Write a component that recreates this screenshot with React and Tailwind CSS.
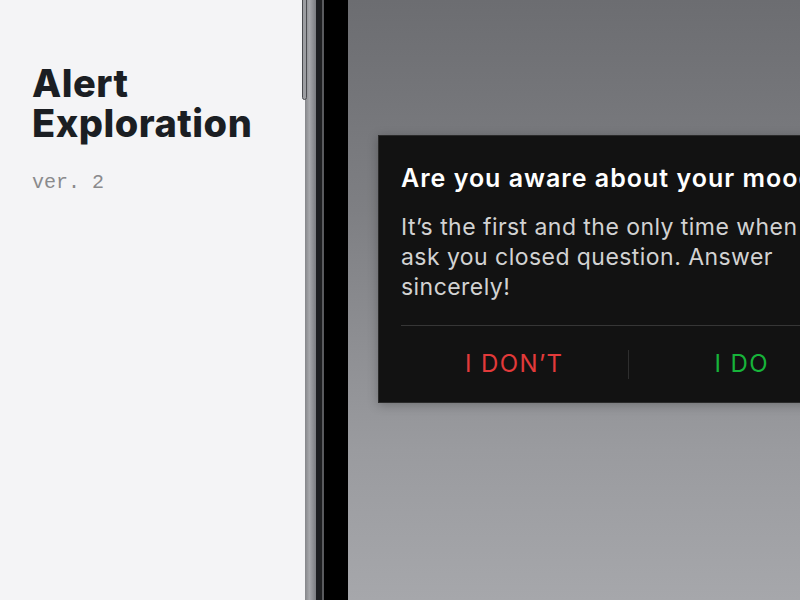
import React from "react";

export default function App() {
  return (
    <div className="w-[800px] h-[600px] overflow-hidden flex bg-[#f4f4f6]">
      <div className="w-[305px] shrink-0 bg-[#f4f4f6] pl-[32px] pt-[63px]">
        <h1 className="text-[38px] leading-[40px] font-extrabold text-[#1b1e23] tracking-[0.5px] font-['Inter',sans-serif]">
          Alert
          <br />
          Exploration
        </h1>
        <div className="mt-[28px] text-[20px] leading-[24px] text-[#8a8a8c] font-['Liberation_Mono',monospace]">
          ver. 2
        </div>
      </div>
      <div className="relative flex shrink-0">
        <div className="w-[11px] bg-[linear-gradient(90deg,#85868a,#a7a8ac_40%,#7b7c80)]" />
        <div className="w-[6px] bg-[#1d1e20]" />
        <div className="w-[2px] bg-[#5a5b5e]" />
        <div className="w-[24px] bg-black" />
        <div className="absolute left-[-3px] top-[-6px] w-[5px] h-[106px] rounded-[3px] border border-[#4a4b4f] bg-[#9c9da1]" />
      </div>
      <div className="relative flex-1 bg-[linear-gradient(180deg,#6c6d71_0%,#7e7f83_35%,#9a9b9f_75%,#a6a7ab_100%)] pt-[135px] pl-[30px]">
        <div className="w-[500px] h-[268px] bg-[#121212] border border-[#2a2a2a] shadow-[0_2px_10px_rgba(0,0,0,0.25)] px-[22px] font-['Inter',sans-serif]">
          <div className="pt-[27px] text-[25px] leading-[30px] font-semibold text-white whitespace-nowrap tracking-[1px]">
            Are you aware about your mood today?
          </div>
          <div className="mt-[19px] text-[23px] leading-[30px] text-[#d2d2d2] whitespace-nowrap tracking-[0.45px]">
            It’s the first and the only time when we
            <br />
            ask you closed question. Answer
            <br />
            sincerely!
          </div>
          <div className="mt-[23px] h-px bg-[#363636]" />
          <div className="flex items-center h-[76px]">
            <div className="flex-1 text-center text-[24px] tracking-[1.4px] text-[#e23a3a]">I DON’T</div>
            <div className="w-px h-[29px] bg-[#2e2e2e]" />
            <div className="flex-1 text-center text-[24px] tracking-[1.4px] text-[#17b43a]">I DO</div>
          </div>
        </div>
      </div>
    </div>
  );
}
